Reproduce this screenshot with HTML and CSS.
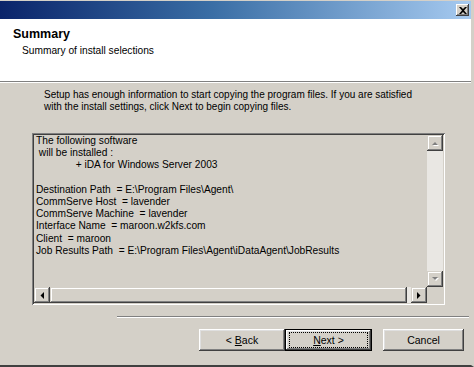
FILE: index.html
```html
<!DOCTYPE html>
<html lang="en">
<head>
    <meta charset="UTF-8">
    <title>Summary</title>
    <link rel="stylesheet" href="styles.css">
</head>
<body>
    <div class="window">
        <div class="titlebar">
            <span class="close">
                <svg width="8" height="7" viewBox="0 0 8 7"><path d="M0 0h2l2 2 2-2h2L5 3.5 8 7H6L4 5 2 7H0l3-3.5z" fill="#000"/></svg>
            </span>
        </div>

        <div class="header">
            <h1>Summary</h1>
            <p>Summary of install selections</p>
        </div>

        <div class="body">
            <p class="intro">Setup has enough information to start copying the program files. If you are satisfied<br>with the install settings, click Next to begin copying files.</p>

            <div class="listbox">
<pre class="content">The following software
 will be installed :
              + iDA for Windows Server 2003

Destination Path  = E:\Program Files\Agent\
CommServe Host  = lavender
CommServe Machine  = lavender
Interface Name  = maroon.w2kfs.com
Client  = maroon
Job Results Path  = E:\Program Files\Agent\iDataAgent\JobResults</pre>
                <div class="vscroll">
                    <span class="arrow-btn">
                        <svg width="8" height="5" viewBox="0 0 8 5"><path d="M1 4h6L4 1z" fill="#fff" transform="translate(1 1)"/><path d="M1 4h6L4 1z" fill="#808080"/></svg>
                    </span>
                    <span class="track"></span>
                    <span class="arrow-btn">
                        <svg width="8" height="5" viewBox="0 0 8 5"><path d="M1 0h6L4 3z" fill="#fff" transform="translate(1 1)"/><path d="M1 0h6L4 3z" fill="#808080"/></svg>
                    </span>
                </div>
                <div class="hscroll">
                    <span class="arrow-btn">
                        <svg width="4" height="7" viewBox="0 0 4 7"><path d="M4 0v7L0.5 3.5z" fill="#000"/></svg>
                    </span>
                    <span class="thumb"></span>
                    <span class="track"></span>
                    <span class="arrow-btn">
                        <svg width="4" height="7" viewBox="0 0 4 7"><path d="M0 0v7l3.5-3.5z" fill="#000"/></svg>
                    </span>
                </div>
                <div class="corner"></div>
            </div>

            <div class="divider"></div>

            <div class="buttons">
                <button class="btn btn-back">&lt; <u>B</u>ack</button>
                <button class="btn btn-next"><span class="focus"><u>N</u>ext &gt;</span></button>
                <button class="btn btn-cancel">Cancel</button>
            </div>
        </div>
    </div>
</body>
</html>
```

FILE: styles.css
```css
/* Janela do assistente */
body {
    margin: 0;
    background-color: #d4d0c8;
    font-family: "Liberation Sans", Arial, sans-serif;
    font-size: 10px;
    color: #000;
}

.window {
    width: 474px;
    height: 367px;
    box-sizing: border-box;
    display: flex;
    flex-direction: column;
    border-top: 1px solid #d4d0c8;
    border-right: 3px solid #d4d0c8;
    border-bottom: 2px solid #404040;
    background-color: #d4d0c8;
}

/* Barra de titulo */
.titlebar {
    height: 18px;
    flex-shrink: 0;
    display: flex;
    align-items: center;
    justify-content: flex-end;
    padding-right: 2px;
    background: linear-gradient(to right, #0a246a, #3a6ea5 45%, #a6caf0);
}

.close {
    width: 13px;
    height: 12px;
    display: flex;
    align-items: center;
    justify-content: center;
    background-color: #d4d0c8;
    box-shadow: inset -1px -1px #404040, inset 1px 1px #fff, inset -2px -2px #808080;
}

/* Cabecalho branco */
.header {
    height: 63px;
    flex-shrink: 0;
    box-sizing: border-box;
    background-color: #fff;
    border-bottom: 1px solid #808080;
    box-shadow: 0 1px #fff;
    padding: 7px 0 0 13px;
}

.header h1 {
    margin: 0;
    font-size: 12.5px;
    line-height: 16px;
    font-weight: bold;
}

.header p {
    margin: 2px 0 0 9px;
    font-size: 10.2px;
    line-height: 14px;
}

/* Corpo cinza */
.body {
    flex: 1;
    padding: 6px 26px 0 32px;
}

.intro {
    margin: 0 0 20px 12px;
    line-height: 12px;
    white-space: nowrap;
    padding-top: 1px;
}

/* Caixa de texto com barras de rolagem */
.listbox {
    height: 172px;
    box-sizing: border-box;
    padding: 2px;
    display: grid;
    grid-template-columns: 1fr 16px;
    grid-template-rows: 1fr 16px;
    box-shadow: inset 1px 1px #808080, inset -1px -1px #fff, inset 2px 2px #404040, inset -2px -2px #d4d0c8;
}

.content {
    margin: 0;
    padding: 0 0 0 2px;
    font-family: inherit;
    font-size: 10.2px;
    line-height: 12.2px;
    overflow: hidden;
}

.vscroll,
.hscroll {
    display: flex;
    background-color: #e9e7e3;
}

.vscroll {
    flex-direction: column;
}

.track {
    flex: 1;
}

.hscroll .track {
    flex: 0 0 4px;
}

.arrow-btn {
    width: 16px;
    height: 16px;
    flex-shrink: 0;
    display: flex;
    align-items: center;
    justify-content: center;
    background-color: #d4d0c8;
    box-shadow: inset -1px -1px #404040, inset 1px 1px #d4d0c8, inset -2px -2px #808080, inset 2px 2px #fff;
}

.thumb {
    flex: 1;
    background-color: #d4d0c8;
    box-shadow: inset -1px -1px #404040, inset 1px 1px #d4d0c8, inset -2px -2px #808080, inset 2px 2px #fff;
}

.corner {
    background-color: #d4d0c8;
}

/* Linha separadora */
.divider {
    margin: 11px -24px 0 85px;
    height: 1px;
    border-top: 1px solid #808080;
    background-color: #fff;
}

/* Botoes */
.buttons {
    display: flex;
    justify-content: flex-end;
    margin: 11px -19px 0 0;
}

.btn {
    height: 22px;
    padding: 0;
    border: none;
    font-family: inherit;
    font-size: 10.5px;
    color: #000;
    background-color: #d4d0c8;
    box-shadow: inset -1px -1px #404040, inset 1px 1px #fff, inset -2px -2px #808080, inset 2px 2px #dfdfdf;
}

.btn-back {
    width: 86px;
}

.btn-next {
    width: 87px;
    border: 1px solid #000;
    display: flex;
    align-items: center;
    justify-content: center;
}

.btn-next .focus {
    display: block;
    width: 77px;
    height: 14px;
    line-height: 14px;
    border: 1px dotted #000;
    text-align: center;
}

.btn-cancel {
    width: 81px;
    margin-left: 11px;
}
```
